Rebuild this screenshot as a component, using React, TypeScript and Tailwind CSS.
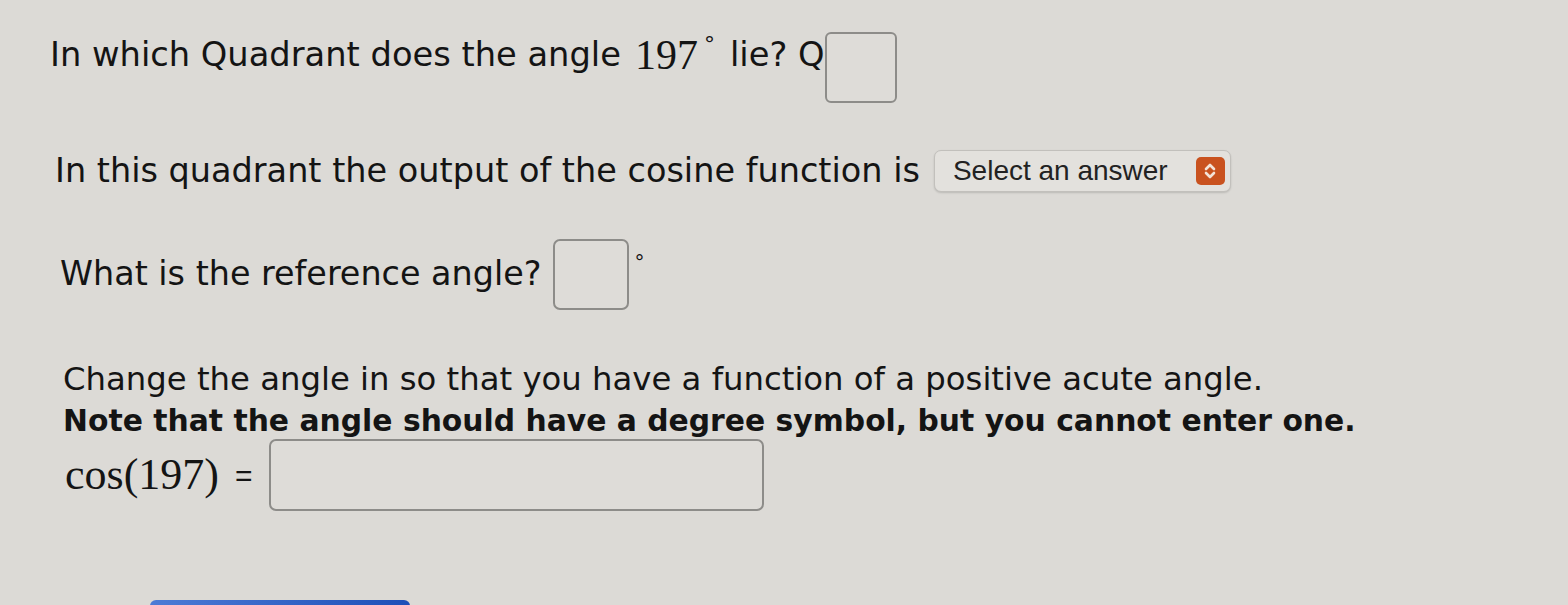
import { useState } from "react";

const App = () => {
  const [quadrant, setQuadrant] = useState<string>("");
  const [refAngle, setRefAngle] = useState<string>("");
  const [answer, setAnswer] = useState<string>("");

  return (
    <div className="w-full h-[605px] overflow-hidden bg-[#dcdad6] text-[#141414] font-['DejaVu_Sans',sans-serif] relative">
      <div className="flex flex-col pt-[30px]">
        {/* question 1 */}
        <div className="flex items-start pl-[50px] h-[73px]">
          <span className="text-[33.7px] leading-[50px]">In which Quadrant does the angle</span>
          <span className="text-[42px] leading-[50px] ml-[14px] font-['Liberation_Serif',serif]">197</span>
          <span className="text-[22px] leading-[22px] mt-[4px] ml-[6px]">°</span>
          <span className="text-[33.7px] leading-[50px] ml-[15px]">lie? Q</span>
          <input
            value={quadrant}
            onChange={(e) => setQuadrant(e.target.value)}
            className="w-[72px] h-[71px] mt-[2px] border-2 border-[#8d8c89] rounded-[6px] bg-[#dedcd8] outline-none"
          />
        </div>

        {/* question 2 */}
        <div className="flex items-center pl-[55px] mt-[47px] h-[42px]">
          <span className="text-[33.5px]">In this quadrant the output of the cosine function is</span>
          <div className="ml-[14px] w-[297px] h-[42px] flex items-center justify-between pl-[18px] pr-[5px] border border-[#c2c0bc] rounded-[7px] bg-[#e3e1dd] shadow-[0_1px_2px_rgba(0,0,0,0.15)]">
            <span className="text-[28px] font-['Liberation_Sans',sans-serif] text-[#222]">Select an answer</span>
            <div className="w-[29px] h-[28px] rounded-[5px] bg-[#c9521f] flex items-center justify-center">
              <svg width="14" height="20" viewBox="0 0 14 20" fill="none" stroke="#f3e3d8" strokeWidth={2.6} strokeLinecap="round" strokeLinejoin="round">
                <path d="M3 8l4-4 4 4" />
                <path d="M3 12l4 4 4-4" />
              </svg>
            </div>
          </div>
        </div>

        {/* question 3 */}
        <div className="flex items-center pl-[60px] mt-[47px] h-[71px]">
          <span className="text-[33.4px]">What is the reference angle?</span>
          <input
            value={refAngle}
            onChange={(e) => setRefAngle(e.target.value)}
            className="ml-[12px] w-[76px] h-[71px] border-2 border-[#8d8c89] rounded-[7px] bg-[#dedcd8] outline-none"
          />
          <span className="text-[20px] self-start mt-[8px] ml-[5px]">°</span>
        </div>

        {/* question 4 */}
        <div className="flex flex-col pl-[63px] mt-[48px]">
          <span className="text-[32.3px] leading-[42px]">Change the angle in so that you have a function of a positive acute angle.</span>
          <span className="text-[29.8px] leading-[38px] mt-[2px] font-bold">Note that the angle should have a degree symbol, but you cannot enter one.</span>
          <div className="flex items-center mt-[-1px] h-[72px]">
            <span className="text-[44px] font-['Liberation_Serif',serif] pl-[2px]">cos(197)</span>
            <span className="text-[30px] ml-[16px] font-['Liberation_Sans',sans-serif]">=</span>
            <input
              value={answer}
              onChange={(e) => setAnswer(e.target.value)}
              className="ml-[16px] w-[495px] h-[72px] border-2 border-[#8d8c89] rounded-[7px] bg-[#dedcd8] outline-none"
            />
          </div>
        </div>
      </div>
      <div className="absolute left-[150px] top-[600px] w-[260px] h-[20px] rounded-[6px] bg-gradient-to-r from-[#4d7bd6] to-[#1d4fb8]" />
    </div>
  );
};

export default App;
